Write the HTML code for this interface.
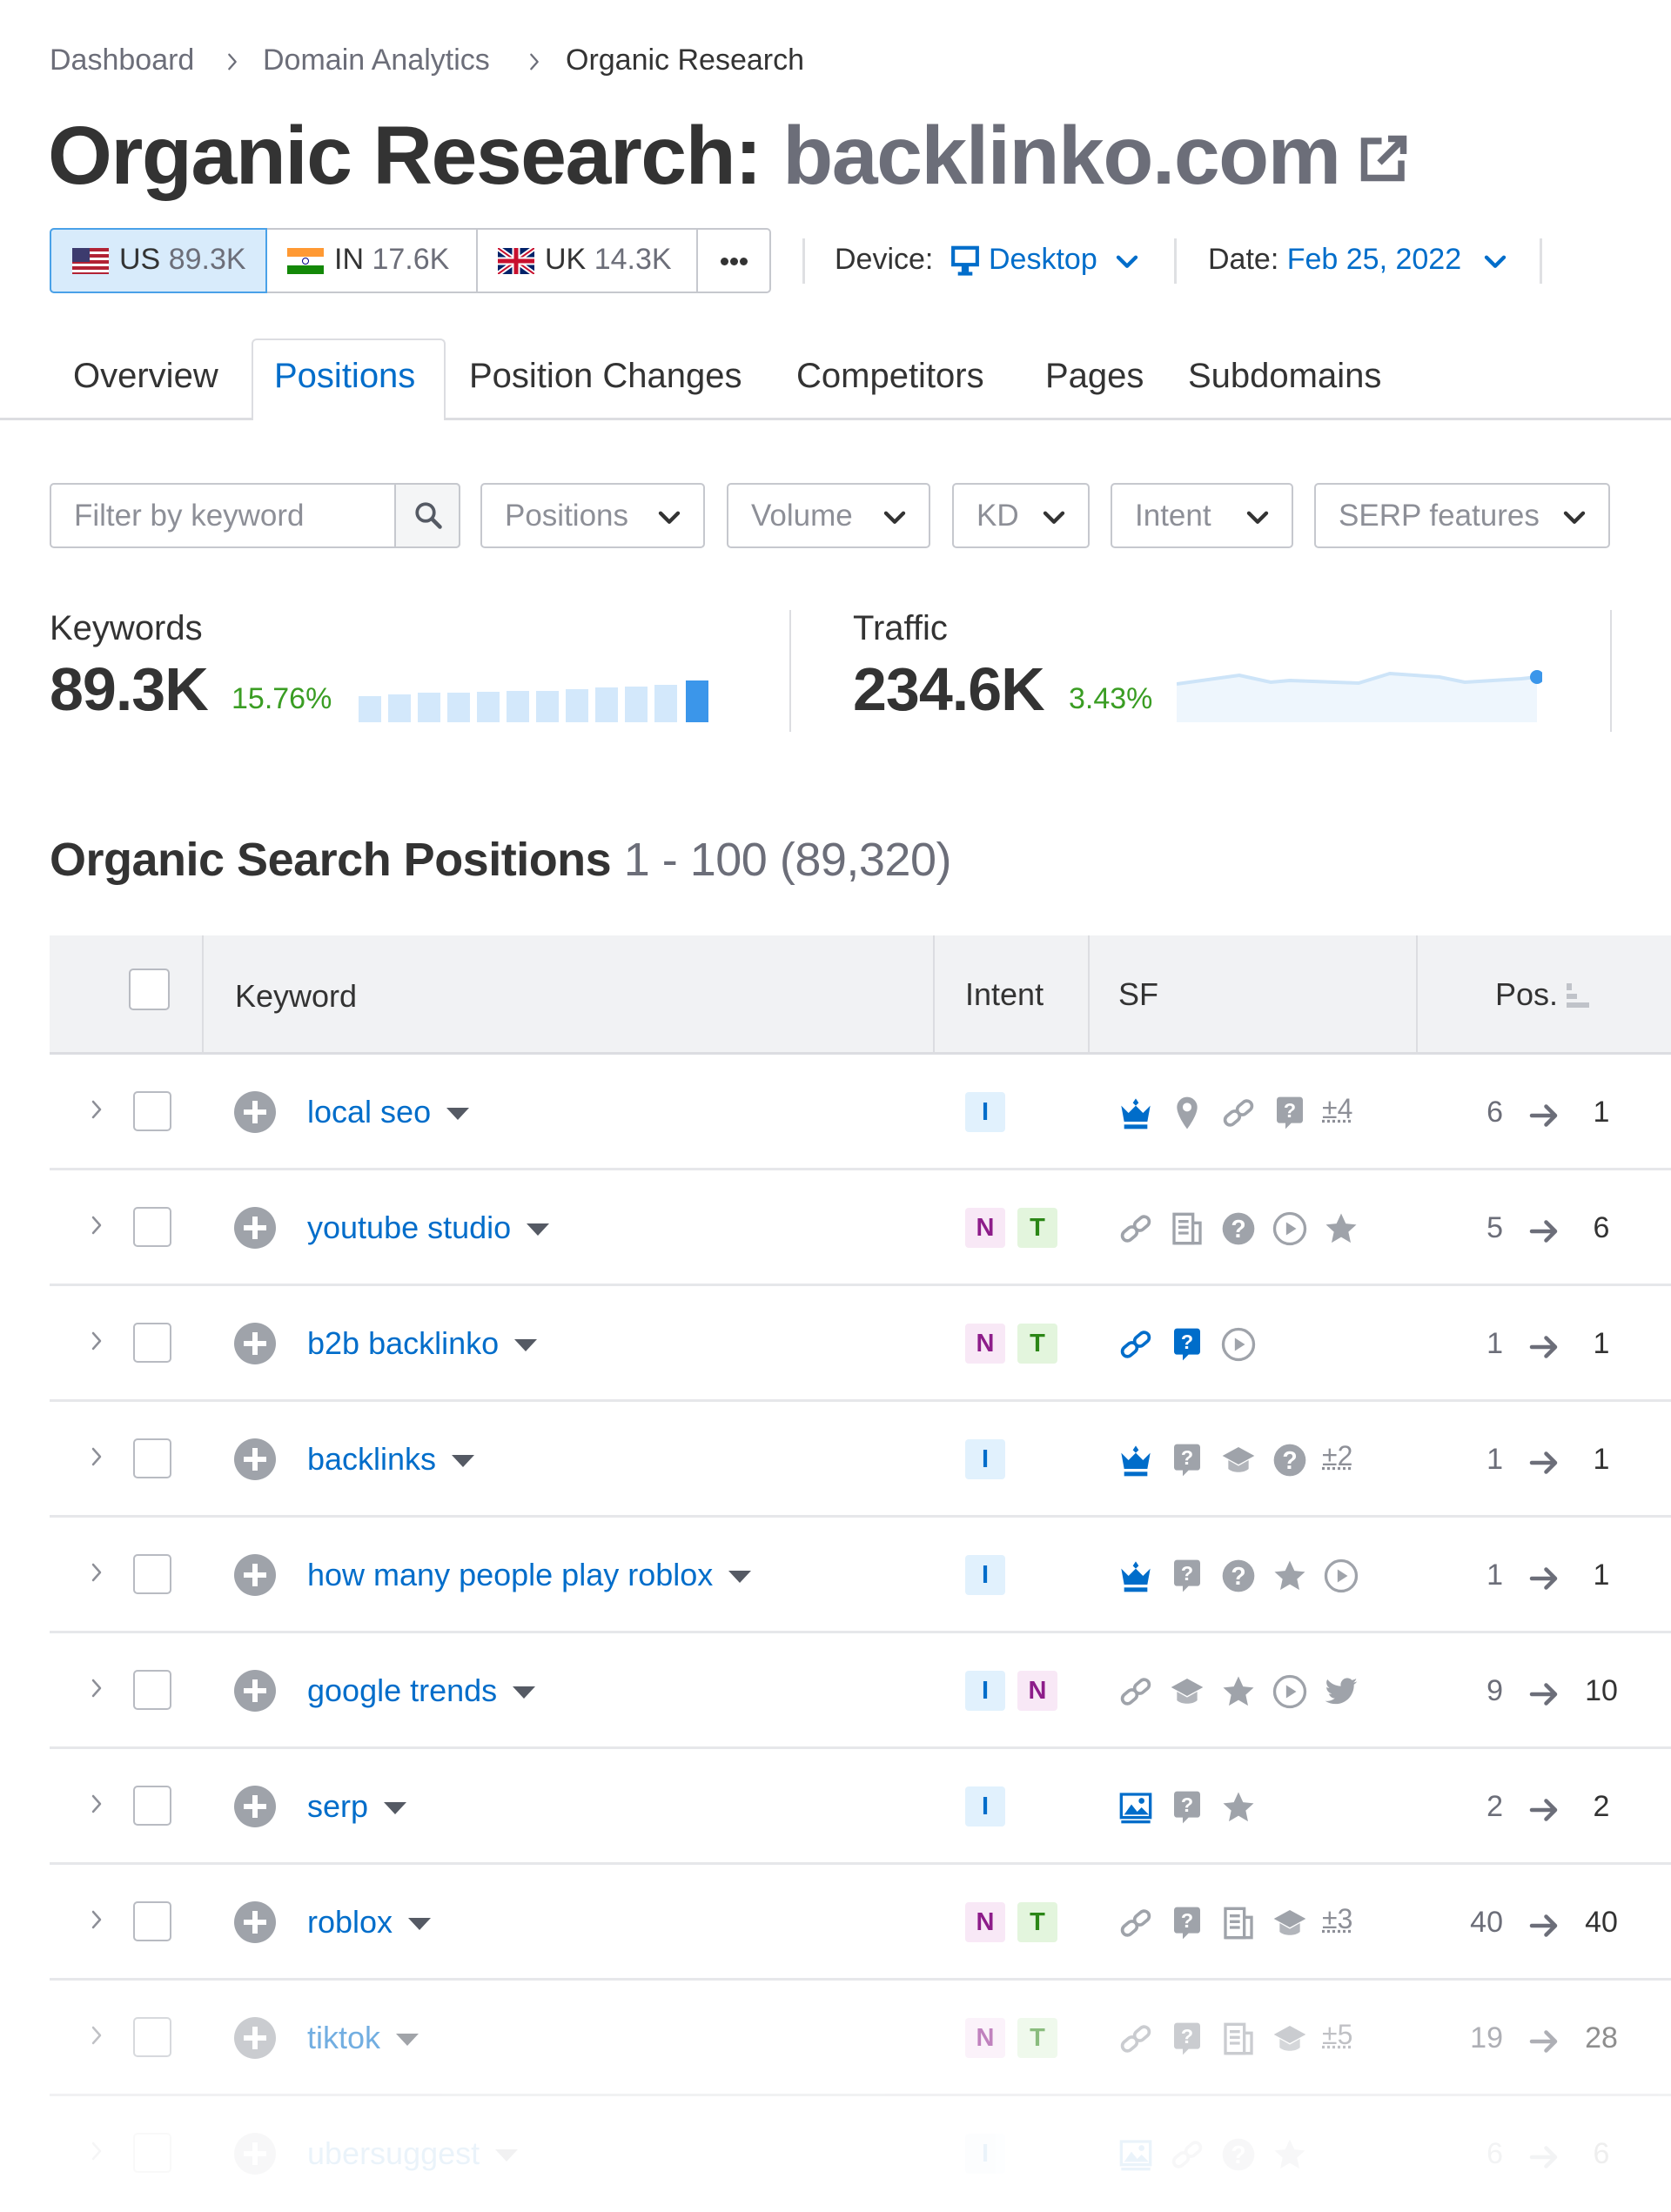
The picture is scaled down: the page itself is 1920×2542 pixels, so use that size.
<!DOCTYPE html>
<html><head><meta charset="utf-8"><style>
*{box-sizing:border-box;margin:0;padding:0}
body{width:1920px;height:2494px;background:#fff;font-family:"Liberation Sans",Arial,sans-serif;color:#333;position:relative;overflow:hidden}
.a{position:absolute;white-space:nowrap}
.blue{color:#006dca}
.gray{color:#6c6e79}
.fbox{position:absolute;top:555px;height:75px;border:2px solid #c6c8ce;border-radius:5px;font-size:35px;color:#8d8f97;padding-left:26px;line-height:71px}
.fbox svg{position:absolute;right:24px;top:24px}
.row{position:absolute;left:57px;width:1863px;height:133px;border-bottom:3px solid #e6e7ea}
.row .chev{position:absolute;left:42px;top:45px}
.row .cb{position:absolute;left:96px;top:42px;width:44px;height:46px;border:2px solid #b8bbc2;border-radius:5px;background:#fff}
.row .plus{position:absolute;left:212px;top:42px;width:48px;height:48px;border-radius:50%;background:#9fa3aa}
.row .plus:before{content:"";position:absolute;left:11px;top:21px;width:26px;height:6px;background:#fff}
.row .plus:after{content:"";position:absolute;left:21px;top:11px;width:6px;height:26px;background:#fff}
.row .kw{position:absolute;left:296px;top:42px;font-size:36px;color:#006dca;line-height:48px}
.row .kw i{display:inline-block;width:0;height:0;border-left:13px solid transparent;border-right:13px solid transparent;border-top:14px solid #555a64;margin-left:18px;vertical-align:middle}
.bd{position:absolute;top:43px;width:46px;height:46px;border-radius:4px;font-size:29px;font-weight:bold;text-align:center;line-height:46px}
.bI{background:#e1f1fd;color:#006dca}
.bN{background:#f8e8f6;color:#8d1d8a}
.bT{background:#e3f5dd;color:#2b8616}
.sf{position:absolute;top:47px;width:40px;height:40px}
.more{position:absolute;top:44px;font-size:32px;color:#8d8f97;text-decoration:underline dotted}
.p1,.p2{position:absolute;top:44px;font-size:34px;line-height:44px}
.p1{color:#6c6e79;right:193px;text-align:right}
.p2{color:#333;left:1743px;width:80px;text-align:center}
.arr{position:absolute;left:1698px;top:52px}
.dot{position:absolute;top:296px;width:9px;height:9px;border-radius:50%;background:#333}
</style></head><body>
<svg width="0" height="0" style="position:absolute">
<defs>
<symbol id="crown" viewBox="0 0 24 24"><path d="M12 2l2 3-2 2-2-2zM2 7l5 5 5-5 5 5 5-5-2 11H4z" fill="currentColor"/><rect x="4" y="20" width="16" height="3" fill="currentColor"/></symbol>
<symbol id="pin" viewBox="0 0 24 24"><path d="M12 1a7 7 0 0 0-7 7c0 6 7 15 7 15s7-9 7-15a7 7 0 0 0-7-7z" fill="currentColor"/><circle cx="12" cy="8" r="3" fill="#fff"/></symbol>
<symbol id="link" viewBox="0 0 24 24"><g fill="none" stroke="currentColor" stroke-width="2.2" stroke-linecap="round" transform="rotate(-40 12 12)"><rect x="1" y="8.5" width="11" height="7" rx="3.5"/><rect x="12" y="8.5" width="11" height="7" rx="3.5"/></g></symbol>
<symbol id="qa" viewBox="0 0 24 24"><path d="M5 1h14a2 2 0 0 1 2 2v14a2 2 0 0 1-2 2h-6l-4 4v-4H5a2 2 0 0 1-2-2V3a2 2 0 0 1 2-2z" fill="currentColor"/><text x="12" y="15" font-size="14" font-weight="bold" text-anchor="middle" fill="#fff" font-family="Liberation Sans">?</text></symbol>
<symbol id="q" viewBox="0 0 24 24"><circle cx="12" cy="12" r="11" fill="currentColor"/><text x="12" y="18" font-size="17" font-weight="bold" text-anchor="middle" fill="#fff" font-family="Liberation Sans">?</text></symbol>
<symbol id="play" viewBox="0 0 24 24"><circle cx="12" cy="12" r="10.5" fill="none" stroke="currentColor" stroke-width="2"/><path d="M9.5 7.5v9l7-4.5z" fill="currentColor"/></symbol>
<symbol id="star" viewBox="0 0 24 24"><path d="M12 1.5l3.2 7 7.3.7-5.5 5 1.6 7.5L12 17.8l-6.6 3.9L7 14.2 1.5 9.2l7.3-.7z" fill="currentColor"/></symbol>
<symbol id="news" viewBox="0 0 24 24"><g fill="none" stroke="currentColor" stroke-width="2"><path d="M3 2h13v20H3z"/><path d="M16 8h5v14H3"/><path d="M6 7h7M6 11h7M6 15h7"/></g></symbol>
<symbol id="grad" viewBox="0 0 24 24"><path d="M1 9l11-6 11 6-11 6z" fill="currentColor"/><path d="M5 12v6c3 3 11 3 14 0v-6l-7 4z" fill="currentColor" opacity=".8"/></symbol>
<symbol id="tw" viewBox="0 0 24 24"><path d="M23 5a9 9 0 0 1-2.6.7A4.5 4.5 0 0 0 22.4 3a9 9 0 0 1-2.9 1.1 4.5 4.5 0 0 0-7.700 4.1A12.8 12.8 0 0 1 2.5 3.5a4.5 4.5 0 0 0 1.4 6 4.5 4.5 0 0 1-2-.6 4.5 4.5 0 0 0 3.6 4.5 4.5 4.5 0 0 1-2 .1 4.5 4.5 0 0 0 4.2 3.1A9 9 0 0 1 1 18.4 12.8 12.8 0 0 0 8 20.5c8.3 0 12.8-6.9 12.8-12.8v-.6A9 9 0 0 0 23 5z" fill="currentColor"/></symbol>
<symbol id="img" viewBox="0 0 24 24"><g fill="none" stroke="currentColor" stroke-width="2"><path d="M2 3h20v16H2z"/></g><path d="M4 17l5-7 4 5 3-3 5 5z" fill="currentColor"/><circle cx="16" cy="7.5" r="2" fill="currentColor"/><rect x="2" y="21" width="20" height="2" fill="currentColor"/></symbol>
<symbol id="chev" viewBox="0 0 24 24"><path d="M4 7l8 8 8-8" fill="none" stroke="currentColor" stroke-width="3.5" stroke-linecap="round" stroke-linejoin="round"/></symbol>
<symbol id="rchev" viewBox="0 0 24 24"><path d="M8 3l8 9-8 9" fill="none" stroke="currentColor" stroke-width="2.5" stroke-linecap="round" stroke-linejoin="round"/></symbol>
<symbol id="rarr" viewBox="0 0 24 24"><path d="M2 12h18M13 5l7 7-7 7" fill="none" stroke="currentColor" stroke-width="3" stroke-linecap="round" stroke-linejoin="round"/></symbol>
</defs></svg>

<div class="a" style="left:57px;top:50px;font-size:34px;color:#6c6e79">Dashboard</div>
<svg class="a" style="left:256px;top:60px;color:#6c6e79" width="22" height="22"><use href="#rchev"/></svg>
<div class="a" style="left:302px;top:50px;font-size:34px;color:#6c6e79">Domain Analytics</div>
<svg class="a" style="left:603px;top:60px;color:#6c6e79" width="22" height="22"><use href="#rchev"/></svg>
<div class="a" style="left:650px;top:50px;font-size:34px;color:#333">Organic Research</div>

<div class="a" style="left:55px;top:124px;font-size:95px;font-weight:bold;color:#333;letter-spacing:-1.5px;line-height:110px">Organic Research: <span style="color:#6c6e79">backlinko.com</span></div>
<svg class="a" style="left:1560px;top:152px;color:#6c6e79" width="60" height="60" viewBox="0 0 24 24"><g fill="none" stroke="currentColor" stroke-width="3"><path d="M11 4H3v17h17v-8"/><path d="M10 14L21 3M14 3h7v7"/></g></svg>

<div class="a" style="left:57px;top:262px;width:829px;height:75px;border:2px solid #c6c8ce;border-radius:5px"></div>
<div class="a" style="left:57px;top:262px;width:250px;height:75px;border:2px solid #49a1e8;border-radius:5px 0 0 5px;background:#d8ebfb"></div>
<div class="a" style="left:547px;top:264px;width:2px;height:71px;background:#c6c8ce"></div>
<div class="a" style="left:800px;top:264px;width:2px;height:71px;background:#c6c8ce"></div>
<svg class="a" style="left:83px;top:285px" width="42" height="30"><rect width="42" height="30" fill="#b22234"/><g fill="#fff"><rect y="4" width="42" height="3"/><rect y="11" width="42" height="3"/><rect y="18" width="42" height="3"/><rect y="25" width="42" height="3"/></g><rect width="20" height="16" fill="#3c3b6e"/></svg>
<div class="a" style="left:137px;top:279px;font-size:34px;color:#333">US <span class="gray">89.3K</span></div>
<svg class="a" style="left:330px;top:285px" width="42" height="30"><rect width="42" height="10" fill="#f93"/><rect y="10" width="42" height="10" fill="#fff"/><rect y="20" width="42" height="10" fill="#138808"/><circle cx="21" cy="15" r="3.5" fill="none" stroke="#008" stroke-width="1"/></svg>
<div class="a" style="left:384px;top:279px;font-size:34px;color:#333">IN <span class="gray">17.6K</span></div>
<svg class="a" style="left:572px;top:285px" width="42" height="30"><rect width="42" height="30" fill="#012169"/><path d="M0 0L42 30M42 0L0 30" stroke="#fff" stroke-width="6"/><path d="M0 0L42 30M42 0L0 30" stroke="#c8102e" stroke-width="2"/><path d="M21 0v30M0 15h42" stroke="#fff" stroke-width="9"/><path d="M21 0v30M0 15h42" stroke="#c8102e" stroke-width="5"/></svg>
<div class="a" style="left:626px;top:279px;font-size:34px;color:#333">UK <span class="gray">14.3K</span></div>
<div class="dot" style="left:828px"></div><div class="dot" style="left:839px"></div><div class="dot" style="left:850px"></div>

<div class="a" style="left:922px;top:274px;width:3px;height:52px;background:#dfe0e3"></div>
<div class="a" style="left:959px;top:279px;font-size:34px;color:#333">Device:</div>
<svg class="a" style="left:1092px;top:282px;color:#006dca" width="34" height="36" viewBox="0 0 24 26"><rect x="2" y="2" width="20" height="14" fill="none" stroke="currentColor" stroke-width="3"/><rect x="9" y="16" width="6" height="6" fill="currentColor"/><rect x="6" y="22" width="12" height="3" fill="currentColor"/></svg>
<div class="a blue" style="left:1136px;top:279px;font-size:34px">Desktop</div>
<svg class="a" style="left:1280px;top:287px;color:#006dca" width="30" height="30"><use href="#chev"/></svg>
<div class="a" style="left:1349px;top:274px;width:3px;height:52px;background:#dfe0e3"></div>
<div class="a" style="left:1388px;top:279px;font-size:34px;color:#333">Date: <span class="blue">Feb 25, 2022</span></div>
<svg class="a" style="left:1703px;top:287px;color:#006dca" width="30" height="30"><use href="#chev"/></svg>
<div class="a" style="left:1769px;top:274px;width:3px;height:52px;background:#dfe0e3"></div>

<div class="a" style="left:0;top:480px;width:1920px;height:3px;background:#dcdde1"></div>
<div class="a" style="left:289px;top:389px;width:223px;height:94px;border:2px solid #dcdde1;border-bottom:none;border-radius:6px 6px 0 0;background:#fff"></div>
<div class="a" style="left:84px;top:410px;font-size:40px;color:#333">Overview</div>
<div class="a blue" style="left:315px;top:410px;font-size:40px">Positions</div>
<div class="a" style="left:539px;top:410px;font-size:40px;color:#333">Position Changes</div>
<div class="a" style="left:915px;top:410px;font-size:40px;color:#333">Competitors</div>
<div class="a" style="left:1201px;top:410px;font-size:40px;color:#333">Pages</div>
<div class="a" style="left:1365px;top:410px;font-size:40px;color:#333">Subdomains</div>

<div class="fbox" style="left:57px;width:472px">Filter by keyword</div>
<div class="a" style="left:453px;top:555px;width:76px;height:75px;border:2px solid #c6c8ce;border-radius:0 5px 5px 0;background:#f4f5f6"></div>
<svg class="a" style="left:474px;top:574px;color:#555a64" width="36" height="36" viewBox="0 0 24 24"><circle cx="10" cy="10" r="6.5" fill="none" stroke="currentColor" stroke-width="2.5"/><path d="M15 15l6 6" stroke="currentColor" stroke-width="3" stroke-linecap="round"/></svg>
<div class="fbox" style="left:552px;width:258px">Positions<svg width="30" height="30" style="color:#333"><use href="#chev"/></svg></div>
<div class="fbox" style="left:835px;width:234px">Volume<svg width="30" height="30" style="color:#333"><use href="#chev"/></svg></div>
<div class="fbox" style="left:1094px;width:158px">KD<svg width="30" height="30" style="color:#333"><use href="#chev"/></svg></div>
<div class="fbox" style="left:1276px;width:210px">Intent<svg width="30" height="30" style="color:#333"><use href="#chev"/></svg></div>
<div class="fbox" style="left:1510px;width:340px">SERP features<svg width="30" height="30" style="color:#333"><use href="#chev"/></svg></div>

<div class="a" style="left:57px;top:700px;font-size:40px;color:#333">Keywords</div>
<div class="a" style="left:57px;top:752px;font-size:70px;font-weight:bold;color:#333;letter-spacing:-1px">89.3K</div>
<div class="a" style="left:266px;top:784px;font-size:34px;color:#3a9d23">15.76%</div>
<svg class="a" style="left:412px;top:770px" width="410" height="60">
<g fill="#d3e8fb">
<rect x="0" y="30" width="26" height="30"/><rect x="34" y="28" width="26" height="32"/><rect x="68" y="26" width="26" height="34"/><rect x="102" y="26" width="26" height="34"/><rect x="136" y="25" width="26" height="35"/><rect x="170" y="24" width="26" height="36"/><rect x="204" y="24" width="26" height="36"/><rect x="238" y="22" width="26" height="38"/><rect x="272" y="20" width="26" height="40"/><rect x="306" y="19" width="26" height="41"/><rect x="340" y="17" width="26" height="43"/></g>
<rect x="376" y="12" width="26" height="48" fill="#3b96ea"/></svg>
<div class="a" style="left:907px;top:701px;width:2px;height:140px;background:#dcdde1"></div>
<div class="a" style="left:980px;top:700px;font-size:40px;color:#333">Traffic</div>
<div class="a" style="left:980px;top:752px;font-size:70px;font-weight:bold;color:#333;letter-spacing:-1px">234.6K</div>
<div class="a" style="left:1228px;top:784px;font-size:34px;color:#3a9d23">3.43%</div>
<svg class="a" style="left:1352px;top:760px" width="420" height="72">
<path d="M0 26L72 16 108 24 130 22 209 25 245 14 302 18 331 24 396 20 414 18 L414 70 0 70Z" fill="#eef6fd"/>
<polyline points="0,26 72,16 108,24 130,22 209,25 245,14 302,18 331,24 396,20 414,18" fill="none" stroke="#cde4f8" stroke-width="4"/>
<circle cx="414" cy="18" r="8" fill="#3b96ea"/></svg>
<div class="a" style="left:1850px;top:701px;width:2px;height:140px;background:#dcdde1"></div>

<div class="a" style="left:57px;top:957px;font-size:54px;font-weight:bold;color:#333;letter-spacing:-0.5px">Organic Search Positions <span style="font-weight:normal;color:#6c6e79">1 - 100 (89,320)</span></div>

<div class="a" style="left:57px;top:1075px;width:1863px;height:137px;background:#f1f2f4;border-bottom:3px solid #dcdde1"></div>
<div class="a" style="left:232px;top:1075px;width:2px;height:135px;background:#dcdde1"></div>
<div class="a" style="left:1072px;top:1075px;width:2px;height:135px;background:#dcdde1"></div>
<div class="a" style="left:1250px;top:1075px;width:2px;height:135px;background:#dcdde1"></div>
<div class="a" style="left:1627px;top:1075px;width:2px;height:135px;background:#dcdde1"></div>
<div class="a" style="left:148px;top:1113px;width:47px;height:48px;border:2px solid #b8bbc2;border-radius:5px;background:#fff"></div>
<div class="a" style="left:270px;top:1124px;font-size:36px;color:#333">Keyword</div>
<div class="a" style="left:1109px;top:1122px;font-size:36px;color:#333">Intent</div>
<div class="a" style="left:1285px;top:1122px;font-size:36px;color:#333">SF</div>
<div class="a" style="left:1718px;top:1122px;font-size:36px;color:#333">Pos.</div>
<div class="a" style="left:1800px;top:1130px;width:6px;height:8px;background:#c0c3c9"></div>
<div class="a" style="left:1800px;top:1142px;width:12px;height:6px;background:#c0c3c9"></div>
<div class="a" style="left:1800px;top:1152px;width:26px;height:6px;background:#c0c3c9"></div>

<div class="row" style="top:1212px">
<svg class="chev" width="24" height="36" style="color:#8d8f97"><use href="#rchev"/></svg><div class="cb"></div><div class="plus"></div>
<div class="kw">local seo<i></i></div>
<div class="bd bI" style="left:1052px">I</div>
<svg class="sf" style="left:1228px;color:#006dca"><use href="#crown"/></svg>
<svg class="sf" style="left:1287px;color:#9fa3aa"><use href="#pin"/></svg>
<svg class="sf" style="left:1346px;color:#9fa3aa"><use href="#link"/></svg>
<svg class="sf" style="left:1405px;color:#9fa3aa"><use href="#qa"/></svg>
<div class="more" style="left:1462px">±4</div>
<div class="p1">6</div><svg class="arr" width="40" height="36" style="color:#6c6e79"><use href="#rarr"/></svg><div class="p2">1</div>
</div>

<div class="row" style="top:1345px">
<svg class="chev" width="24" height="36" style="color:#8d8f97"><use href="#rchev"/></svg><div class="cb"></div><div class="plus"></div>
<div class="kw">youtube studio<i></i></div>
<div class="bd bN" style="left:1052px">N</div><div class="bd bT" style="left:1112px">T</div>
<svg class="sf" style="left:1228px;color:#9fa3aa"><use href="#link"/></svg>
<svg class="sf" style="left:1287px;color:#9fa3aa"><use href="#news"/></svg>
<svg class="sf" style="left:1346px;color:#9fa3aa"><use href="#q"/></svg>
<svg class="sf" style="left:1405px;color:#9fa3aa"><use href="#play"/></svg>
<svg class="sf" style="left:1464px;color:#9fa3aa"><use href="#star"/></svg>
<div class="p1">5</div><svg class="arr" width="40" height="36" style="color:#6c6e79"><use href="#rarr"/></svg><div class="p2">6</div>
</div>

<div class="row" style="top:1478px">
<svg class="chev" width="24" height="36" style="color:#8d8f97"><use href="#rchev"/></svg><div class="cb"></div><div class="plus"></div>
<div class="kw">b2b backlinko<i></i></div>
<div class="bd bN" style="left:1052px">N</div><div class="bd bT" style="left:1112px">T</div>
<svg class="sf" style="left:1228px;color:#006dca"><use href="#link"/></svg>
<svg class="sf" style="left:1287px;color:#006dca"><use href="#qa"/></svg>
<svg class="sf" style="left:1346px;color:#9fa3aa"><use href="#play"/></svg>
<div class="p1">1</div><svg class="arr" width="40" height="36" style="color:#6c6e79"><use href="#rarr"/></svg><div class="p2">1</div>
</div>

<div class="row" style="top:1611px">
<svg class="chev" width="24" height="36" style="color:#8d8f97"><use href="#rchev"/></svg><div class="cb"></div><div class="plus"></div>
<div class="kw">backlinks<i></i></div>
<div class="bd bI" style="left:1052px">I</div>
<svg class="sf" style="left:1228px;color:#006dca"><use href="#crown"/></svg>
<svg class="sf" style="left:1287px;color:#9fa3aa"><use href="#qa"/></svg>
<svg class="sf" style="left:1346px;color:#9fa3aa"><use href="#grad"/></svg>
<svg class="sf" style="left:1405px;color:#9fa3aa"><use href="#q"/></svg>
<div class="more" style="left:1462px">±2</div>
<div class="p1">1</div><svg class="arr" width="40" height="36" style="color:#6c6e79"><use href="#rarr"/></svg><div class="p2">1</div>
</div>

<div class="row" style="top:1744px">
<svg class="chev" width="24" height="36" style="color:#8d8f97"><use href="#rchev"/></svg><div class="cb"></div><div class="plus"></div>
<div class="kw">how many people play roblox<i></i></div>
<div class="bd bI" style="left:1052px">I</div>
<svg class="sf" style="left:1228px;color:#006dca"><use href="#crown"/></svg>
<svg class="sf" style="left:1287px;color:#9fa3aa"><use href="#qa"/></svg>
<svg class="sf" style="left:1346px;color:#9fa3aa"><use href="#q"/></svg>
<svg class="sf" style="left:1405px;color:#9fa3aa"><use href="#star"/></svg>
<svg class="sf" style="left:1464px;color:#9fa3aa"><use href="#play"/></svg>
<div class="p1">1</div><svg class="arr" width="40" height="36" style="color:#6c6e79"><use href="#rarr"/></svg><div class="p2">1</div>
</div>

<div class="row" style="top:1877px">
<svg class="chev" width="24" height="36" style="color:#8d8f97"><use href="#rchev"/></svg><div class="cb"></div><div class="plus"></div>
<div class="kw">google trends<i></i></div>
<div class="bd bI" style="left:1052px">I</div><div class="bd bN" style="left:1112px">N</div>
<svg class="sf" style="left:1228px;color:#9fa3aa"><use href="#link"/></svg>
<svg class="sf" style="left:1287px;color:#9fa3aa"><use href="#grad"/></svg>
<svg class="sf" style="left:1346px;color:#9fa3aa"><use href="#star"/></svg>
<svg class="sf" style="left:1405px;color:#9fa3aa"><use href="#play"/></svg>
<svg class="sf" style="left:1464px;color:#9fa3aa"><use href="#tw"/></svg>
<div class="p1">9</div><svg class="arr" width="40" height="36" style="color:#6c6e79"><use href="#rarr"/></svg><div class="p2">10</div>
</div>

<div class="row" style="top:2010px">
<svg class="chev" width="24" height="36" style="color:#8d8f97"><use href="#rchev"/></svg><div class="cb"></div><div class="plus"></div>
<div class="kw">serp<i></i></div>
<div class="bd bI" style="left:1052px">I</div>
<svg class="sf" style="left:1228px;color:#006dca"><use href="#img"/></svg>
<svg class="sf" style="left:1287px;color:#9fa3aa"><use href="#qa"/></svg>
<svg class="sf" style="left:1346px;color:#9fa3aa"><use href="#star"/></svg>
<div class="p1">2</div><svg class="arr" width="40" height="36" style="color:#6c6e79"><use href="#rarr"/></svg><div class="p2">2</div>
</div>

<div class="row" style="top:2143px">
<svg class="chev" width="24" height="36" style="color:#8d8f97"><use href="#rchev"/></svg><div class="cb"></div><div class="plus"></div>
<div class="kw">roblox<i></i></div>
<div class="bd bN" style="left:1052px">N</div><div class="bd bT" style="left:1112px">T</div>
<svg class="sf" style="left:1228px;color:#9fa3aa"><use href="#link"/></svg>
<svg class="sf" style="left:1287px;color:#9fa3aa"><use href="#qa"/></svg>
<svg class="sf" style="left:1346px;color:#9fa3aa"><use href="#news"/></svg>
<svg class="sf" style="left:1405px;color:#9fa3aa"><use href="#grad"/></svg>
<div class="more" style="left:1462px">±3</div>
<div class="p1">40</div><svg class="arr" width="40" height="36" style="color:#6c6e79"><use href="#rarr"/></svg><div class="p2">40</div>
</div>

<div class="row" style="top:2276px;opacity:.55">
<svg class="chev" width="24" height="36" style="color:#8d8f97"><use href="#rchev"/></svg><div class="cb"></div><div class="plus"></div>
<div class="kw">tiktok<i></i></div>
<div class="bd bN" style="left:1052px">N</div><div class="bd bT" style="left:1112px">T</div>
<svg class="sf" style="left:1228px;color:#9fa3aa"><use href="#link"/></svg>
<svg class="sf" style="left:1287px;color:#9fa3aa"><use href="#qa"/></svg>
<svg class="sf" style="left:1346px;color:#9fa3aa"><use href="#news"/></svg>
<svg class="sf" style="left:1405px;color:#9fa3aa"><use href="#grad"/></svg>
<div class="more" style="left:1462px">±5</div>
<div class="p1">19</div><svg class="arr" width="40" height="36" style="color:#6c6e79"><use href="#rarr"/></svg><div class="p2">28</div>
</div>

<div class="row" style="top:2409px;opacity:.08;border-bottom:none">
<svg class="chev" width="24" height="36" style="color:#8d8f97"><use href="#rchev"/></svg><div class="cb"></div><div class="plus"></div>
<div class="kw">ubersuggest<i></i></div>
<div class="bd bI" style="left:1052px">I</div>
<svg class="sf" style="left:1228px;color:#006dca"><use href="#img"/></svg>
<svg class="sf" style="left:1287px;color:#9fa3aa"><use href="#link"/></svg>
<svg class="sf" style="left:1346px;color:#9fa3aa"><use href="#q"/></svg>
<svg class="sf" style="left:1405px;color:#9fa3aa"><use href="#star"/></svg>
<div class="p1">6</div><svg class="arr" width="40" height="36" style="color:#6c6e79"><use href="#rarr"/></svg><div class="p2">6</div>
</div>
</body></html>
